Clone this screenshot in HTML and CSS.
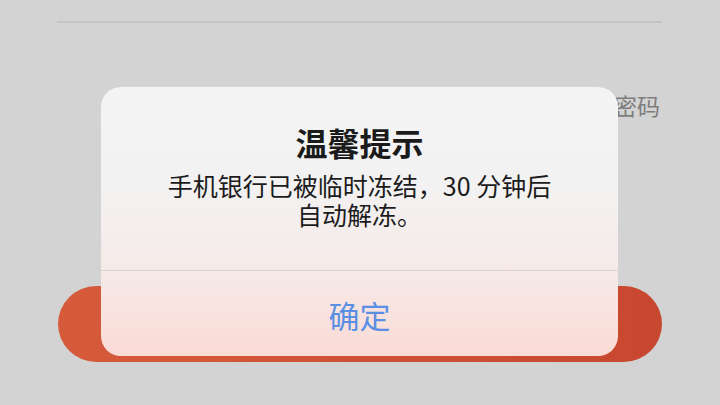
FILE: index.html
```html
<!DOCTYPE html>
<html lang="zh-CN">
<head>
<meta charset="utf-8">
<title>温馨提示</title>
<link rel="stylesheet" href="styles.css">
</head>
<body>
<div class="page">
  <div class="rule"></div>
  <div class="link-row"><span class="link">忘记密码</span></div>
  <div class="login-btn"></div>
</div>
<div class="dialog">
  <div class="dialog-body">
    <div class="dialog-title">温馨提示</div>
    <div class="dialog-msg">
      <div class="msg-line">手机银行已被临时冻结，30 分钟后</div>
      <div class="msg-line">自动解冻。</div>
    </div>
  </div>
  <div class="dialog-btn">确定</div>
</div>
</body>
</html>
```
FILE: styles.css
```css
html, body {
  margin: 0;
  padding: 0;
}
body {
  width: 720px;
  height: 405px;
  overflow: hidden;
  background: #d3d3d3;
  font-family: "Noto Sans CJK SC", "Noto Sans", sans-serif;
  position: relative;
}
.page {
  padding: 21px 58px 0 57px;
  display: flex;
  flex-direction: column;
}
.rule {
  height: 2px;
  background: #c5c5c5;
}
.link-row {
  margin-top: 67px;
  height: 30px;
  display: flex;
  justify-content: flex-end;
  padding-right: 2px;
}
.link {
  font-size: 23px;
  line-height: 30px;
  color: #7d7d7d;
}
.login-btn {
  margin: 166px 0 0 1px;
  height: 76px;
  border-radius: 38px;
  background: linear-gradient(to right, #d55b3b, #c8472f);
}
.dialog {
  position: absolute;
  left: 101px;
  top: 87px;
  width: 517px;
  height: 269px;
  border-radius: 20px;
  overflow: hidden;
  display: flex;
  flex-direction: column;
  background: linear-gradient(to bottom, #f4f4f4 0%, #f3f2f2 35%, #f5eae8 68%, #f8e3df 82%, #fadbd5 100%);
}
.dialog-body {
  height: 184px;
  padding-top: 36px;
  box-sizing: border-box;
  text-align: center;
  border-bottom: 1px solid #e0cfcc;
}
.dialog-title {
  font-size: 32px;
  line-height: 38px;
  font-weight: 700;
  color: #1b1b1b;
}
.dialog-msg {
  margin-top: 10px;
  font-size: 25px;
  line-height: 29px;
  color: #1c1c1c;
}
.dialog-btn {
  flex: 1;
  display: flex;
  align-items: center;
  justify-content: center;
  font-size: 31px;
  color: #5b8fe3;
  padding-top: 1px;
}
```
